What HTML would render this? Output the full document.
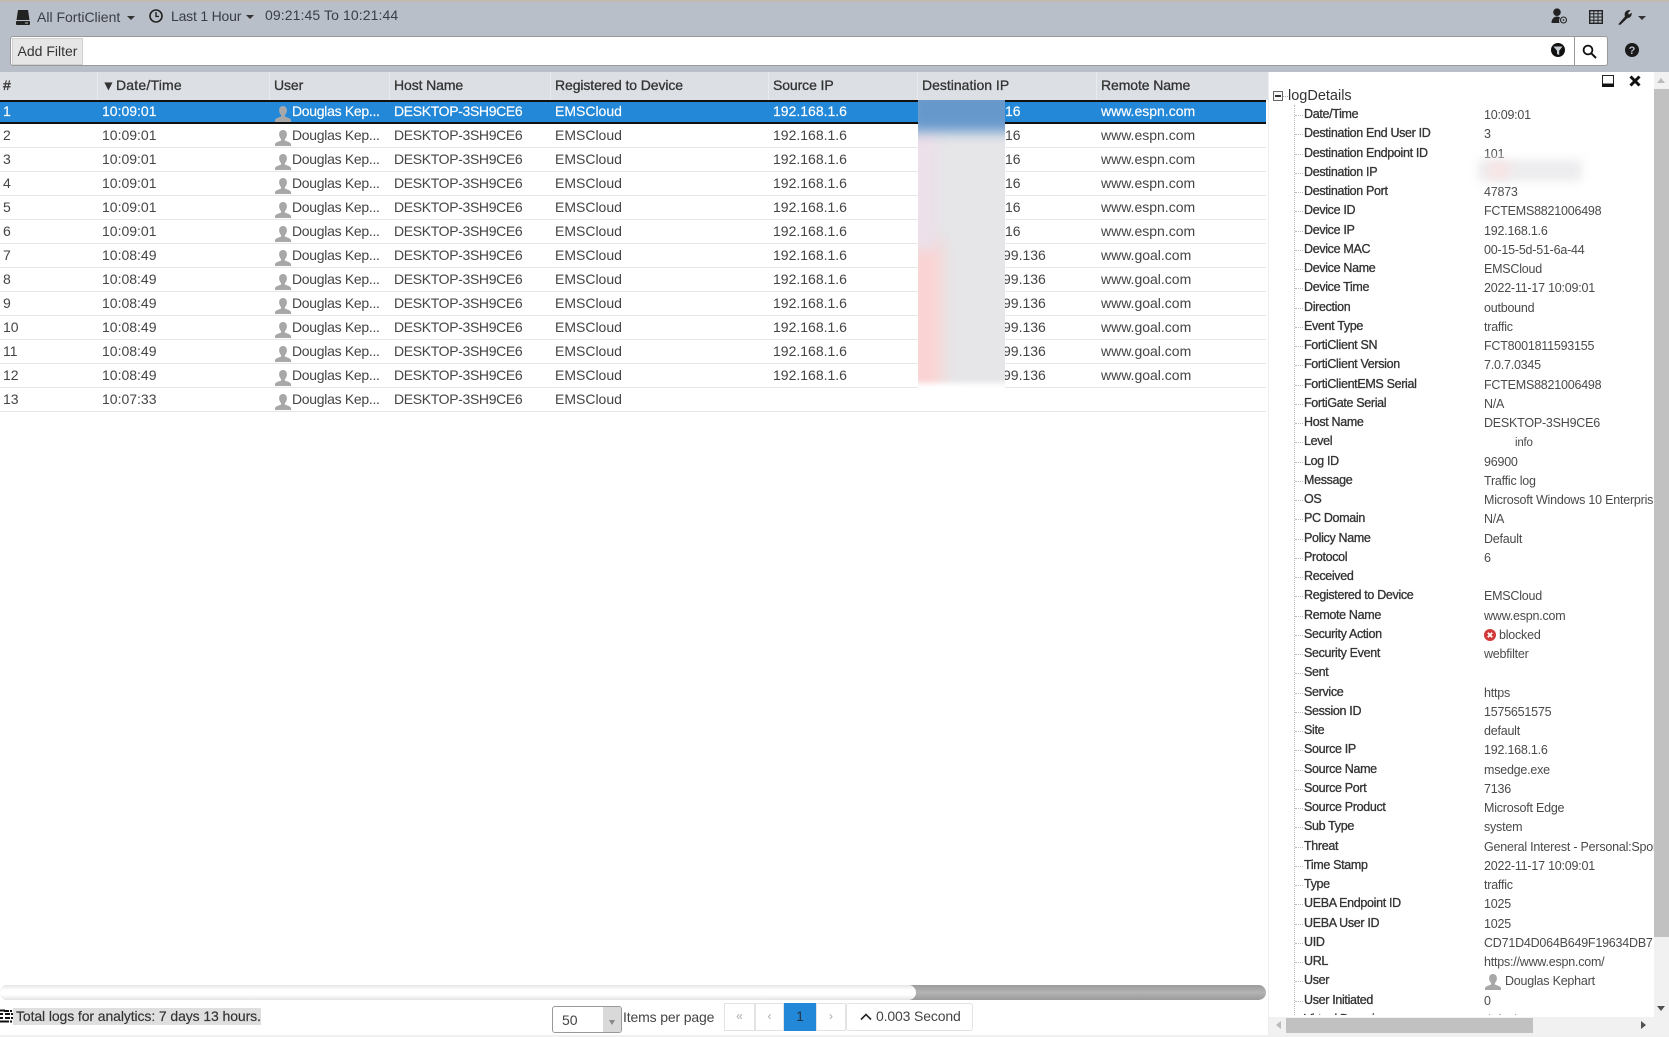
<!DOCTYPE html>
<html><head><meta charset="utf-8"><title>Logs</title>
<style>
*{box-sizing:border-box}
html,body{margin:0;padding:0;width:1669px;height:1037px;overflow:hidden;background:#fff;font-family:"Liberation Sans",sans-serif;color:#333}
.a{position:absolute}
#top{left:0;top:0;width:1669px;height:72px;background:#b9bfc9;border-top:2px solid #c2bcb0}
.tt{position:absolute;font-size:14px;color:#3a3d44;white-space:nowrap;line-height:16px}
.caret{position:absolute;width:0;height:0;border-left:4px solid transparent;border-right:4px solid transparent;border-top:4px solid #333}
#filter{left:10px;top:36px;width:1598px;height:30px;background:#fff;border:1px solid #999;border-radius:3px}
#addf{left:12px;top:38px;width:71px;height:27px;background:#e6e6e6;border:1px solid #d0d0d0;font-size:14px;line-height:25px;text-align:center;color:#333}
#hd{left:0;top:72px;width:1268px;height:28px;background:#dcdfe4}
.h{position:absolute;top:5px;font-size:14px;line-height:17px;color:#333;-webkit-text-stroke:.3px #333;white-space:nowrap;letter-spacing:-.1px}
.sep{position:absolute;top:0;width:1px;height:28px;background:#e8eaee}
.r{position:absolute;left:0;width:1266px;height:24px;border-bottom:1px solid #e6e6e6;font-size:14px;color:#444}
.r span{position:absolute;top:3px;line-height:17px;white-space:nowrap}
.r svg{position:absolute;left:274px;top:5px}
.c1{left:3px}.c2{left:102px}.c3{left:292px;letter-spacing:-.3px}.c4{left:394px;letter-spacing:-.35px}.c5{left:555px}.c6{left:773px}.c7{left:1005px}.c7b{left:1003px}.c8{left:1101px}
.sel{background:#2488d8;color:#fff;border-top:2px solid #111;border-bottom:2px solid #111;-webkit-text-stroke:.15px #fff}
.sel span{top:1px}.sel svg{top:3px}
#blur{left:918px;top:100px;width:87px;height:290px;overflow:hidden}
#blur div{position:absolute}
#panel{left:1268px;top:72px;width:401px;height:965px;background:#fff;border-left:1px solid #eee}
#det{left:1268px;top:105px;width:386px;height:910px;overflow:hidden}
.d{height:19.25px;position:relative;font-size:12.5px;line-height:19px;white-space:nowrap}
.d b{position:absolute;left:36px;top:0;font-weight:400;color:#333;-webkit-text-stroke:.3px #333;letter-spacing:-.33px}
.d i{position:absolute;left:216px;top:1px;font-style:normal;color:#4a4a4a;letter-spacing:-.22px}
.d:before{content:"";position:absolute;left:27px;top:10px;width:8px;border-top:1px dotted #bbb}
.pg{position:absolute;top:1003px;height:28px;border:1px solid #e3e3e3;background:#fff;text-align:center;font-size:12px;line-height:25px;color:#aaa}
</style></head><body>

<div id="top" class="a"></div>
<svg class="a" style="left:15px;top:9px" width="16" height="17" viewBox="0 0 16 17"><path d="M3 1h10l1.5 10h-13z" fill="#222"/><rect x="1" y="12" width="14" height="4" rx="1" fill="#222"/><rect x="10" y="13.5" width="3" height="1" fill="#bbb"/></svg>
<div class="tt" style="left:37px;top:9px">All FortiClient</div><div class="caret" style="left:127px;top:16px"></div>
<svg class="a" style="left:148px;top:8px" width="16" height="16" viewBox="0 0 16 16"><circle cx="8" cy="8" r="6" fill="none" stroke="#222" stroke-width="1.6"/><path d="M8 4v4.4h3" fill="none" stroke="#222" stroke-width="1.4"/></svg>
<div class="tt" style="left:171px;top:8px;letter-spacing:-.2px">Last 1 Hour</div><div class="caret" style="left:246px;top:15px"></div>
<div class="tt" style="left:265px;top:7px;letter-spacing:.1px">09:21:45 To 10:21:44</div>

<svg class="a" style="left:1551px;top:8px" width="17" height="17" viewBox="0 0 17 17"><circle cx="6" cy="4.200" r="3.800" fill="#222"/><path d="M0.500 15c0-4.500 2.800-6.500 5.500-6.500 1.500 0 2.500.5 3 1.200-1 1.400-1.200 3.600-.5 5.300z" fill="#222"/><circle cx="12.500" cy="12" r="3" fill="none" stroke="#222" stroke-width="1.100"/><circle cx="12.500" cy="12" r=".9" fill="#222"/></svg>
<svg class="a" style="left:1589px;top:10px" width="14" height="14" viewBox="0 0 14 14"><rect x=".7" y=".7" width="12.6" height="12.6" fill="none" stroke="#222" stroke-width="1.4"/><path d="M.7 3.7h12.6M.7 7h12.6M.7 10.2h12.6M4.8 1v12M9 1v12" stroke="#222" stroke-width="1" fill="none"/></svg>
<svg class="a" style="left:1617px;top:9px" width="16" height="16" viewBox="0 0 16 16"><path d="M1.500 15L8 7.500C7 5 8 2 11 1.200c1-.2 2 0 2.500.2L11 4l1 1.600 2.600-1.800c.5 2.500-1 5-4 5.200l-7 6.600c-.8.500-2.600 0-2.100-.6z" fill="#222"/></svg>
<div class="caret" style="left:1638px;top:16px"></div>

<div id="filter" class="a"></div>
<div id="addf" class="a">Add Filter</div>
<svg class="a" style="left:1551px;top:43px" width="14" height="14" viewBox="0 0 14 14"><circle cx="7" cy="7" r="7" fill="#111"/><path d="M2.500 3.500h9L8.200 7.800V12l-2.200-1V7.800z" fill="#c9ced6"/></svg>
<div class="a" style="left:1574px;top:37px;width:1px;height:28px;background:#999"></div>
<svg class="a" style="left:1582px;top:44px" width="15" height="15" viewBox="0 0 15 15"><circle cx="6" cy="6" r="4.400" fill="none" stroke="#111" stroke-width="1.800"/><path d="M9.400 9.400L14 14" stroke="#111" stroke-width="2"/></svg>
<svg class="a" style="left:1625px;top:43px" width="14" height="14" viewBox="0 0 14 14"><circle cx="7" cy="7" r="7" fill="#1a1a1a"/><text x="7" y="11" font-size="11" font-weight="700" text-anchor="middle" fill="#b9bfc9" font-family="Liberation Sans">?</text></svg>

<div id="hd" class="a">
<div class="h" style="left:3px">#</div>
<div class="sep" style="left:97px"></div>
<div class="h" style="left:102px;font-size:13px">&#9660;</div>
<div class="h" style="left:116px;letter-spacing:.2px">Date/Time</div>
<div class="sep" style="left:269px"></div>
<div class="h" style="left:274px">User</div>
<div class="sep" style="left:389px"></div>
<div class="h" style="left:394px">Host Name</div>
<div class="sep" style="left:550px"></div>
<div class="h" style="left:555px">Registered to Device</div>
<div class="sep" style="left:768px"></div>
<div class="h" style="left:773px">Source IP</div>
<div class="sep" style="left:917px"></div>
<div class="h" style="left:922px;letter-spacing:0">Destination IP</div>
<div class="sep" style="left:1096px"></div>
<div class="h" style="left:1101px">Remote Name</div>
</div>

<svg width="0" height="0" style="position:absolute"><defs><symbol id="av" viewBox="0 0 18 18"><path d="M9 1c2.600 0 3.900 2 3.900 4.400 0 2-1 3.800-2 4.600v1.600c2.500.8 5.600 1.600 6.100 3.400v2H1v-2c.5-1.800 3.600-2.600 6.100-3.400V10c-1-.8-2-2.600-2-4.600C5.100 3 6.400 1 9 1z" fill="#a8a8a8"/></symbol></defs></svg>

<div class="r sel" style="top:100px"><span class="c1">1</span><span class="c2">10:09:01</span><svg width="18" height="18"><use href="#av"/></svg><span class="c3">Douglas Kep...</span><span class="c4">DESKTOP-3SH9CE6</span><span class="c5">EMSCloud</span><span class="c6">192.168.1.6</span><span class="c7">16</span><span class="c8">www.espn.com</span></div>
<div class="r" style="top:124px"><span class="c1">2</span><span class="c2">10:09:01</span><svg width="18" height="18"><use href="#av"/></svg><span class="c3">Douglas Kep...</span><span class="c4">DESKTOP-3SH9CE6</span><span class="c5">EMSCloud</span><span class="c6">192.168.1.6</span><span class="c7">16</span><span class="c8">www.espn.com</span></div>
<div class="r" style="top:148px"><span class="c1">3</span><span class="c2">10:09:01</span><svg width="18" height="18"><use href="#av"/></svg><span class="c3">Douglas Kep...</span><span class="c4">DESKTOP-3SH9CE6</span><span class="c5">EMSCloud</span><span class="c6">192.168.1.6</span><span class="c7">16</span><span class="c8">www.espn.com</span></div>
<div class="r" style="top:172px"><span class="c1">4</span><span class="c2">10:09:01</span><svg width="18" height="18"><use href="#av"/></svg><span class="c3">Douglas Kep...</span><span class="c4">DESKTOP-3SH9CE6</span><span class="c5">EMSCloud</span><span class="c6">192.168.1.6</span><span class="c7">16</span><span class="c8">www.espn.com</span></div>
<div class="r" style="top:196px"><span class="c1">5</span><span class="c2">10:09:01</span><svg width="18" height="18"><use href="#av"/></svg><span class="c3">Douglas Kep...</span><span class="c4">DESKTOP-3SH9CE6</span><span class="c5">EMSCloud</span><span class="c6">192.168.1.6</span><span class="c7">16</span><span class="c8">www.espn.com</span></div>
<div class="r" style="top:220px"><span class="c1">6</span><span class="c2">10:09:01</span><svg width="18" height="18"><use href="#av"/></svg><span class="c3">Douglas Kep...</span><span class="c4">DESKTOP-3SH9CE6</span><span class="c5">EMSCloud</span><span class="c6">192.168.1.6</span><span class="c7">16</span><span class="c8">www.espn.com</span></div>
<div class="r" style="top:244px"><span class="c1">7</span><span class="c2">10:08:49</span><svg width="18" height="18"><use href="#av"/></svg><span class="c3">Douglas Kep...</span><span class="c4">DESKTOP-3SH9CE6</span><span class="c5">EMSCloud</span><span class="c6">192.168.1.6</span><span class="c7b">99.136</span><span class="c8">www.goal.com</span></div>
<div class="r" style="top:268px"><span class="c1">8</span><span class="c2">10:08:49</span><svg width="18" height="18"><use href="#av"/></svg><span class="c3">Douglas Kep...</span><span class="c4">DESKTOP-3SH9CE6</span><span class="c5">EMSCloud</span><span class="c6">192.168.1.6</span><span class="c7b">99.136</span><span class="c8">www.goal.com</span></div>
<div class="r" style="top:292px"><span class="c1">9</span><span class="c2">10:08:49</span><svg width="18" height="18"><use href="#av"/></svg><span class="c3">Douglas Kep...</span><span class="c4">DESKTOP-3SH9CE6</span><span class="c5">EMSCloud</span><span class="c6">192.168.1.6</span><span class="c7b">99.136</span><span class="c8">www.goal.com</span></div>
<div class="r" style="top:316px"><span class="c1">10</span><span class="c2">10:08:49</span><svg width="18" height="18"><use href="#av"/></svg><span class="c3">Douglas Kep...</span><span class="c4">DESKTOP-3SH9CE6</span><span class="c5">EMSCloud</span><span class="c6">192.168.1.6</span><span class="c7b">99.136</span><span class="c8">www.goal.com</span></div>
<div class="r" style="top:340px"><span class="c1">11</span><span class="c2">10:08:49</span><svg width="18" height="18"><use href="#av"/></svg><span class="c3">Douglas Kep...</span><span class="c4">DESKTOP-3SH9CE6</span><span class="c5">EMSCloud</span><span class="c6">192.168.1.6</span><span class="c7b">99.136</span><span class="c8">www.goal.com</span></div>
<div class="r" style="top:364px"><span class="c1">12</span><span class="c2">10:08:49</span><svg width="18" height="18"><use href="#av"/></svg><span class="c3">Douglas Kep...</span><span class="c4">DESKTOP-3SH9CE6</span><span class="c5">EMSCloud</span><span class="c6">192.168.1.6</span><span class="c7b">99.136</span><span class="c8">www.goal.com</span></div>
<div class="r" style="top:388px"><span class="c1">13</span><span class="c2">10:07:33</span><svg width="18" height="18"><use href="#av"/></svg><span class="c3">Douglas Kep...</span><span class="c4">DESKTOP-3SH9CE6</span><span class="c5">EMSCloud</span></div>

<div id="blur" class="a">
<div style="left:0;top:0;width:87px;height:288px;background:#e6e6e8"></div>
<div style="left:-8px;top:140px;width:32px;height:170px;background:#fbd3d3;filter:blur(8px)"></div>
<div style="left:-8px;top:30px;width:26px;height:120px;background:#ecdfe9;filter:blur(6px)"></div>
<div style="left:-10px;top:-12px;width:110px;height:44px;background:#6798cc;filter:blur(6px)"></div>
<div style="left:-10px;top:283px;width:110px;height:12px;background:#fff;filter:blur(3px)"></div>
</div>

<div id="panel" class="a"></div>
<svg class="a" style="left:1602px;top:75px" width="12" height="12" viewBox="0 0 12 12"><rect x=".5" y=".5" width="11" height="11" fill="#fff" stroke="#222"/><rect y="8.500" width="12" height="3.500" fill="#111"/></svg>
<svg class="a" style="left:1629px;top:75px" width="12" height="12" viewBox="0 0 12 12"><path d="M1.500 1.500l9 9M10.500 1.500l-9 9" stroke="#111" stroke-width="3"/></svg>

<div class="a" style="left:1273px;top:91px;width:10px;height:10px;border:1px solid #666;background:#f4f4f4"><div style="position:absolute;left:1px;top:3px;width:6px;height:2px;background:#333"></div></div>
<div class="a" style="left:1283px;top:96px;width:5px;border-top:1px dotted #aaa"></div>
<div class="a" style="left:1288px;top:87px;font-size:14.500px;line-height:18px;color:#333">logDetails</div>
<div class="a" style="left:1294px;top:105px;height:910px;border-left:1px dotted #bbb"></div>

<div id="det" class="a">
<div class="d"><b>Date/Time</b><i>10:09:01</i></div>
<div class="d"><b>Destination End User ID</b><i>3</i></div>
<div class="d"><b>Destination Endpoint ID</b><i>101</i></div>
<div class="d"><b>Destination IP</b></div>
<div class="d"><b>Destination Port</b><i>47873</i></div>
<div class="d"><b>Device ID</b><i>FCTEMS8821006498</i></div>
<div class="d"><b>Device IP</b><i>192.168.1.6</i></div>
<div class="d"><b>Device MAC</b><i>00-15-5d-51-6a-44</i></div>
<div class="d"><b>Device Name</b><i>EMSCloud</i></div>
<div class="d"><b>Device Time</b><i>2022-11-17 10:09:01</i></div>
<div class="d"><b>Direction</b><i>outbound</i></div>
<div class="d"><b>Event Type</b><i>traffic</i></div>
<div class="d"><b>FortiClient SN</b><i>FCT8001811593155</i></div>
<div class="d"><b>FortiClient Version</b><i>7.0.7.0345</i></div>
<div class="d"><b>FortiClientEMS Serial</b><i>FCTEMS8821006498</i></div>
<div class="d"><b>FortiGate Serial</b><i>N/A</i></div>
<div class="d"><b>Host Name</b><i>DESKTOP-3SH9CE6</i></div>
<div class="d"><b>Level</b><i style="left:247px;top:2px;font-size:11.500px">info</i></div>
<div class="d"><b>Log ID</b><i>96900</i></div>
<div class="d"><b>Message</b><i>Traffic log</i></div>
<div class="d"><b>OS</b><i>Microsoft Windows 10 Enterpris</i></div>
<div class="d"><b>PC Domain</b><i>N/A</i></div>
<div class="d"><b>Policy Name</b><i>Default</i></div>
<div class="d"><b>Protocol</b><i>6</i></div>
<div class="d"><b>Received</b></div>
<div class="d"><b>Registered to Device</b><i>EMSCloud</i></div>
<div class="d"><b>Remote Name</b><i>www.espn.com</i></div>
<div class="d"><b>Security Action</b><i><svg width="12" height="12" viewBox="0 0 12 12" style="vertical-align:-2px;margin-right:3px"><circle cx="6" cy="6" r="6" fill="#d23a3a"/><path d="M3.800 3.800l4.400 4.400M8.200 3.800l-4.400 4.400" stroke="#fff" stroke-width="1.800"/></svg>blocked</i></div>
<div class="d"><b>Security Event</b><i>webfilter</i></div>
<div class="d"><b>Sent</b></div>
<div class="d"><b>Service</b><i>https</i></div>
<div class="d"><b>Session ID</b><i>1575651575</i></div>
<div class="d"><b>Site</b><i>default</i></div>
<div class="d"><b>Source IP</b><i>192.168.1.6</i></div>
<div class="d"><b>Source Name</b><i>msedge.exe</i></div>
<div class="d"><b>Source Port</b><i>7136</i></div>
<div class="d"><b>Source Product</b><i>Microsoft Edge</i></div>
<div class="d"><b>Sub Type</b><i>system</i></div>
<div class="d"><b>Threat</b><i>General Interest - Personal:Sport</i></div>
<div class="d"><b>Time Stamp</b><i>2022-11-17 10:09:01</i></div>
<div class="d"><b>Type</b><i>traffic</i></div>
<div class="d"><b>UEBA Endpoint ID</b><i>1025</i></div>
<div class="d"><b>UEBA User ID</b><i>1025</i></div>
<div class="d"><b>UID</b><i>CD71D4D064B649F19634DB7</i></div>
<div class="d"><b>URL</b><i>https://www.espn.com/</i></div>
<div class="d"><b>User</b><i><svg width="18" height="18" style="vertical-align:-6px;margin-right:3px"><use href="#av"/></svg>Douglas Kephart</i></div>
<div class="d"><b>User Initiated</b><i>0</i></div>
<div class="d"><b>Virtual Domain</b><i>default</i></div>
</div>

<div class="a" style="left:1478px;top:160px;width:104px;height:21px;background:#ececee;filter:blur(5px)"></div>
<div class="a" style="left:1488px;top:162px;width:22px;height:16px;background:#f8e4e4;filter:blur(5px)"></div>

<div class="a" style="left:1654px;top:72px;width:15px;height:963px;background:#f1f1f1"></div>
<div class="a" style="left:1654px;top:89px;width:15px;height:848px;background:#c1c1c1"></div>
<div class="a" style="left:1657px;top:78px;width:0;height:0;border-left:4.500px solid transparent;border-right:4.500px solid transparent;border-bottom:5px solid #bbb"></div>
<div class="a" style="left:1657px;top:1006px;width:0;height:0;border-left:4.500px solid transparent;border-right:4.500px solid transparent;border-top:5px solid #505050"></div>
<div class="a" style="left:1269px;top:1017px;width:400px;height:18px;background:#f1f1f1"></div>
<div class="a" style="left:1286px;top:1018px;width:247px;height:15px;background:#c1c1c1"></div>
<div class="a" style="left:1276px;top:1021px;width:0;height:0;border-top:4.500px solid transparent;border-bottom:4.500px solid transparent;border-right:5px solid #bbb"></div>
<div class="a" style="left:1641px;top:1021px;width:0;height:0;border-top:4.500px solid transparent;border-bottom:4.500px solid transparent;border-left:5px solid #505050"></div>

<div class="a" style="left:0;top:985px;width:1266px;height:15px;border-radius:8px;background:linear-gradient(#9c9c9c,#b4b4b4 50%,#9a9a9a)"></div>
<div class="a" style="left:0;top:985px;width:916px;height:15px;border-radius:8px;background:linear-gradient(#e6e6e6,#fff 35%,#fff 65%,#e4e4e4)"></div>

<svg class="a" style="left:0;top:1009px" width="13" height="14" viewBox="0 0 13 14"><path d="M0 1.500h6M0 5h3M0 9h3M0 12.500h6M5 5h8M5 9h8M4 2h8M4 12.500h8" stroke="#111" stroke-width="2" stroke-dasharray="5 1"/></svg>
<div class="a" style="left:13px;top:1008px;width:248px;height:17px;background:#dfdfdf;font-size:14px;line-height:17px;color:#333;white-space:nowrap;padding-left:3px;-webkit-text-stroke:.15px #333;letter-spacing:-.1px">Total logs for analytics: 7 days 13 hours.</div>

<div class="a" style="left:552px;top:1006px;width:70px;height:27px;border:1px solid #999;border-radius:3px;background:#fff;overflow:hidden"><div style="position:absolute;right:0;top:0;width:18px;height:27px;background:#d9d9d9"></div><div style="position:absolute;left:9px;top:4px;font-size:14px;line-height:18px;color:#444">50</div><div style="position:absolute;right:6px;top:13px;width:0;height:0;border-left:3px solid transparent;border-right:3px solid transparent;border-top:5px solid #888"></div></div>
<div class="a" style="left:623px;top:1008px;font-size:14px;line-height:18px;color:#444;white-space:nowrap;letter-spacing:-.15px">Items per page</div>

<div class="pg" style="left:724px;width:31px">&#171;</div>
<div class="pg" style="left:755px;width:29px">&#8249;</div>
<div class="pg" style="left:784px;width:32px;background:#2488d8;border-color:#2488d8;color:#234;font-size:14px">1</div>
<div class="pg" style="left:816px;width:30px">&#8250;</div>
<div class="pg" style="left:846px;width:127px;border-radius:3px"></div>
<svg class="a" style="left:860px;top:1012px" width="12" height="9" viewBox="0 0 12 9"><path d="M1 7.500l5-5 5 5" fill="none" stroke="#222" stroke-width="1.600"/></svg>
<div class="a" style="left:876px;top:1007px;font-size:14px;line-height:18px;color:#444;white-space:nowrap;letter-spacing:-.15px">0.003 Second</div>

<div class="a" style="left:0;top:1035px;width:1669px;height:2px;background:#f0f0f0"></div>
</body></html>
